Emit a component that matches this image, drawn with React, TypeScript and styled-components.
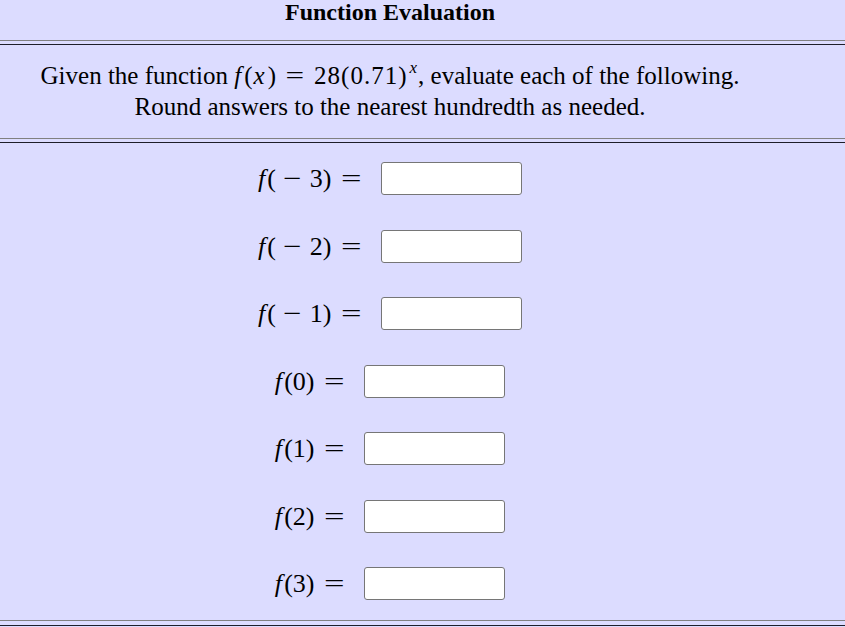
import React from "react";
import styled, { createGlobalStyle } from "styled-components";

const GlobalStyle = createGlobalStyle`
  html, body {
    margin: 0;
    padding: 0;
    background: #dcdcff;
    font-family: "Liberation Serif", "Times New Roman", serif;
    color: #000;
  }
`;

const Page = styled.div`
  width: 845px;
`;

const Header = styled.div`
  height: 40px;
  border-bottom: 1px solid #808080;
`;

const Inner = styled.div`
  width: 780px;
`;

const Title = styled.h1`
  margin: 0;
  font-size: 24px;
  font-weight: bold;
  line-height: 22px;
  padding-top: 1px;
  text-align: center;
`;

const Section = styled.div`
  margin-top: 3px;
  border-top: 1px solid #1e1e2a;
  border-bottom: 1px solid #808080;
`;

const Instructions = styled.p`
  margin: 0;
  padding: 15px 0 16px;
  font-size: 25px;
  line-height: 31px;
  text-align: center;
`;

const Formula = styled.span`
  letter-spacing: 1px;
`;

const Rows = styled.div`
  display: flex;
  flex-direction: column;
  gap: 34.5px;
  padding: 19px 0 20px;
`;

const Row = styled.div`
  display: flex;
  justify-content: center;
  align-items: center;
  gap: 19px;
  height: 33px;
`;

const MathLabel = styled.span`
  font-size: 26px;
  line-height: 33px;
  white-space: nowrap;
`;

const Var = styled.i`
  font-style: italic;
  margin-right: 0.08em;
`;

const Sup = styled.sup`
  font-size: 0.68em;
  font-style: italic;
  vertical-align: 0.62em;
  line-height: 0;
  margin-left: 2px;
`;

// wide math operator (minus / equals), stretched like a TeX glyph
const Op = styled.span<{ $l?: number; $r?: number; $scale?: number }>`
  display: inline-block;
  margin: 0 ${(p) => p.$r ?? 11}px 0 ${(p) => p.$l ?? 11}px;
  transform: scaleX(${(p) => p.$scale ?? 1.32});
`;

const Answer = styled.input`
  box-sizing: border-box;
  width: 141px;
  height: 33px;
  border: 1px solid #767676;
  border-radius: 3px;
  background: #fff;
  font-size: 16px;
  padding: 2px 6px;
  margin: 0;
`;

const Footer = styled.div`
  margin-top: 4px;
  border-top: 1px solid #1e1e2a;
  height: 10px;
`;

const values = ["-3", "-2", "-1", "0", "1", "2", "3"];

const Label: React.FC<{ v: string }> = ({ v }) => {
  const neg = v.startsWith("-");
  return (
    <MathLabel>
      <Var>f</Var>(
      {neg ? (
        <>
          <Op $l={9} $r={10} $scale={1.25}>
            −
          </Op>
          {v.slice(1)}
        </>
      ) : (
        v
      )}
      )
      <Op $l={13} $r={3} $scale={1.4}>
        =
      </Op>
    </MathLabel>
  );
};

export default function App() {
  return (
    <Page>
      <GlobalStyle />
      <Header>
        <Inner>
          <Title>Function Evaluation</Title>
        </Inner>
      </Header>
      <Section>
        <Inner>
          <Instructions>
            Given the function{" "}
            <Formula>
              <Var>f</Var>(<Var>x</Var>)<Op>=</Op>28(0.71)<Sup>x</Sup>
            </Formula>
            , evaluate each of the following.
            <br />
            Round answers to the nearest hundredth as needed.
          </Instructions>
        </Inner>
      </Section>
      <Section>
        <Inner>
          <Rows>
            {values.map((v) => (
              <Row key={v}>
                <Label v={v} />
                <Answer type="text" aria-label={`f(${v})`} />
              </Row>
            ))}
          </Rows>
        </Inner>
      </Section>
      <Footer />
    </Page>
  );
}
